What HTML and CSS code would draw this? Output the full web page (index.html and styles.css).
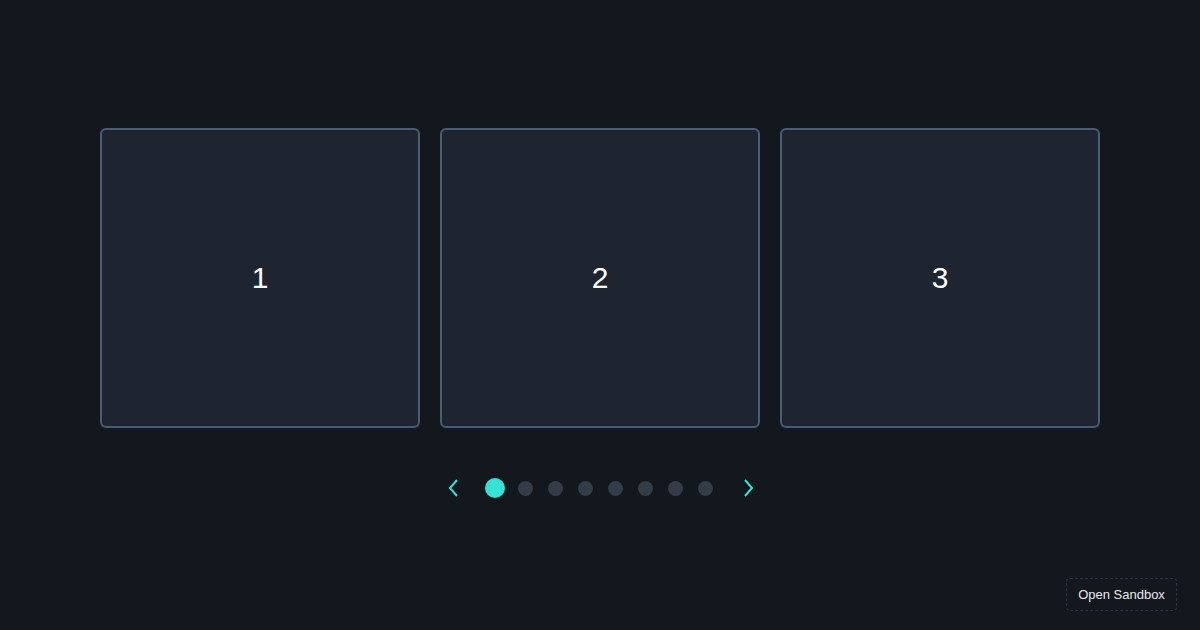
FILE: index.html
```html
<!DOCTYPE html>
<html>
<head>
<meta charset="utf-8">
<link rel="stylesheet" href="styles.css">
</head>
<body>
<div class="stage">
  <div class="carousel">
    <div class="slides">
      <div class="slide">1</div>
      <div class="slide">2</div>
      <div class="slide">3</div>
    </div>
    <div class="controls">
      <button class="arrow">
        <svg width="12" height="20" viewBox="0 0 12 20"><path d="M9 2 L2 10 L9 18" fill="none" stroke="#36e2d4" stroke-width="2"/></svg>
      </button>
      <div class="dots">
        <span class="dot active"></span>
        <span class="dot"></span>
        <span class="dot"></span>
        <span class="dot"></span>
        <span class="dot"></span>
        <span class="dot"></span>
        <span class="dot"></span>
        <span class="dot"></span>
      </div>
      <button class="arrow">
        <svg width="12" height="20" viewBox="0 0 12 20"><path d="M3 2 L10 10 L3 18" fill="none" stroke="#36e2d4" stroke-width="2"/></svg>
      </button>
    </div>
  </div>
  <button class="sandbox">Open Sandbox</button>
</div>
</body>
</html>
```
FILE: styles.css
```css
* { box-sizing: border-box; }
html, body { margin: 0; padding: 0; }
body {
  background: #13171e;
  font-family: "Liberation Sans", Arial, sans-serif;
  width: 1200px;
  height: 630px;
  overflow: hidden;
}
.stage {
  position: relative;
  width: 1200px;
  height: 630px;
  padding-top: 128px;
}
.carousel {
  display: flex;
  flex-direction: column;
  align-items: center;
}
.slides {
  display: flex;
  gap: 20px;
}
.slide {
  width: 320px;
  height: 300px;
  background: #1e2530;
  border: 2px solid #4d5b72;
  border-radius: 6px;
  display: flex;
  align-items: center;
  justify-content: center;
  color: #ffffff;
  font-size: 30px;
}
.controls {
  margin-top: 50px;
  display: flex;
  align-items: center;
  height: 20px;
  margin-left: 2px;
}
.arrow {
  background: none;
  border: none;
  padding: 0;
  width: 12px;
  height: 20px;
  display: flex;
  cursor: pointer;
}
.dots {
  display: flex;
  align-items: center;
  gap: 15px;
  margin: 0 29px 0 25px;
}
.dot {
  width: 15px;
  height: 15px;
  border-radius: 50%;
  background: #333c47;
}
.dot.active {
  width: 20px;
  height: 20px;
  background: #36e2d4;
  margin-right: -2px;
}
.sandbox {
  position: absolute;
  right: 23px;
  bottom: 19px;
  width: 111px;
  height: 33px;
  background: #13171e;
  border: 1px dashed #2a3440;
  border-radius: 4px;
  color: #e6e8eb;
  font-family: "Liberation Sans", Arial, sans-serif;
  font-size: 13px;
  padding: 0;
}
```
